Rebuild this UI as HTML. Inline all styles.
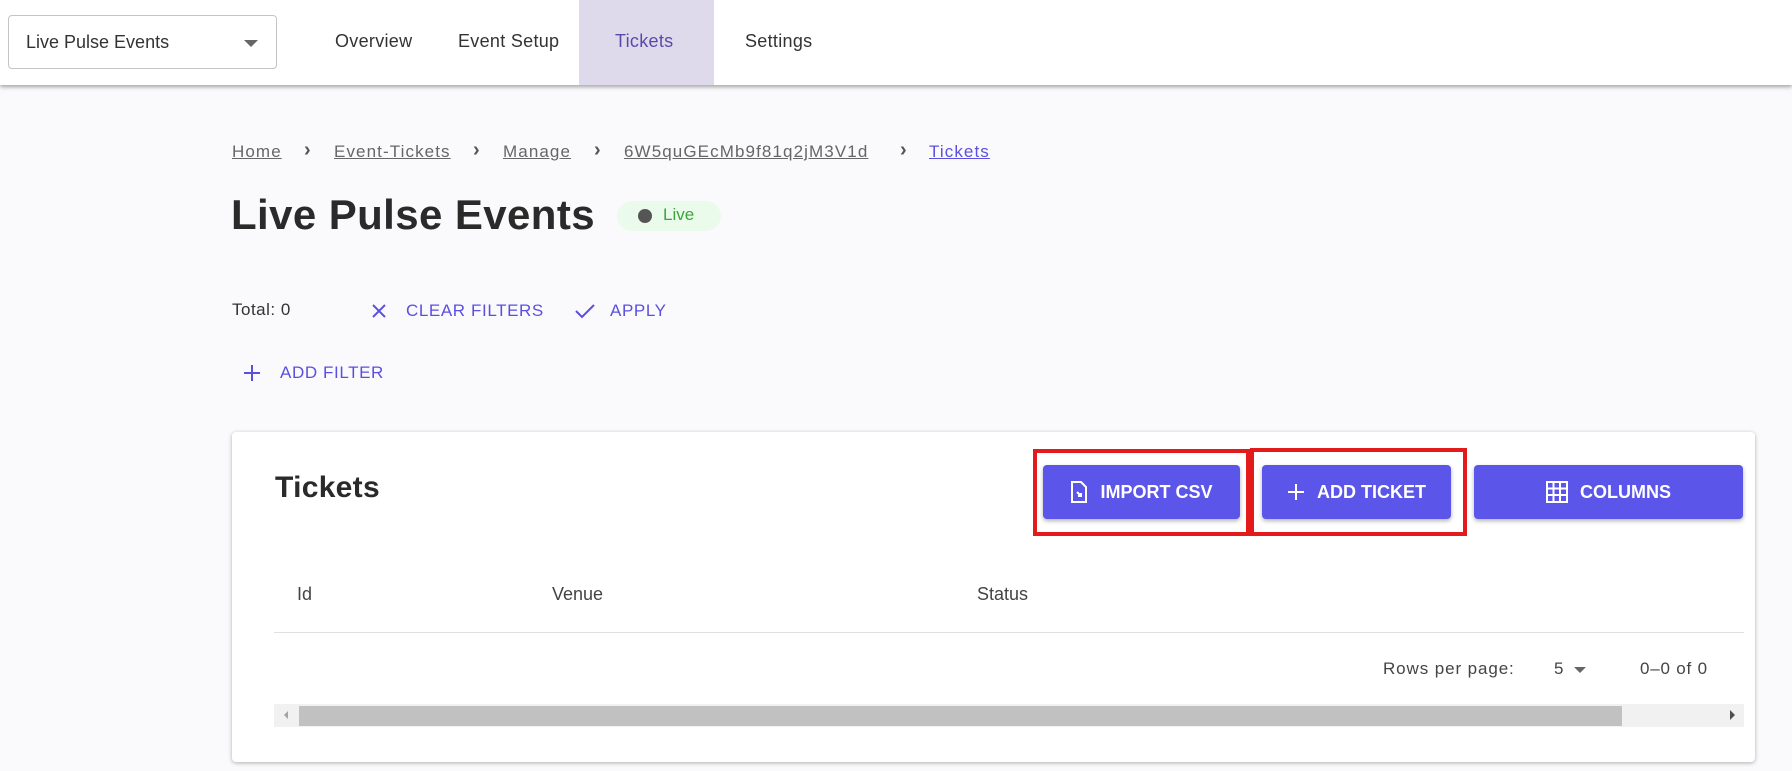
<!DOCTYPE html>
<html><head><meta charset="utf-8"><style>
*{box-sizing:border-box;margin:0;padding:0}
body{width:1792px;height:771px;background:#fafafc;font-family:"Liberation Sans",sans-serif;color:#333;position:relative;overflow:hidden}
.a{position:absolute;white-space:nowrap}
.hdr{position:absolute;left:0;top:0;width:1792px;height:85px;background:#fff;box-shadow:0 2px 4px rgba(0,0,0,.35)}
.nav{font-size:18px;color:#333;top:31px;letter-spacing:0.3px}
.bc{font-size:17px;color:#666;text-decoration:underline;top:142px;letter-spacing:1.1px}
.sep{font-size:20px;color:#555;top:139px;font-weight:bold}
.btn{position:absolute;top:465px;height:54px;background:#5b55ea;border-radius:4px;color:#fff;font-weight:bold;font-size:18px;display:flex;align-items:center;justify-content:center;gap:12px;box-shadow:0 2px 4px rgba(0,0,0,.3)}
.red{position:absolute;border:4px solid #e31b1b}
.th{font-size:18px;color:#444;top:584px}
.pur{color:#5b4fe0;font-size:17px;letter-spacing:0.6px}
</style></head><body>
<div class="hdr">
<div class="a" style="left:8px;top:15px;width:269px;height:54px;border:1px solid #c4c4c4;border-radius:4px"></div>
<div class="a" style="left:26px;top:32px;font-size:18px;color:#333">Live Pulse Events</div>
<div class="a" style="left:244px;top:40px;width:0;height:0;border-left:7px solid transparent;border-right:7px solid transparent;border-top:7px solid #666"></div>
<div class="a" style="left:579px;top:0;width:135px;height:85px;background:#dedaec"></div>
<div class="a nav" style="left:335px">Overview</div>
<div class="a nav" style="left:458px">Event Setup</div>
<div class="a nav" style="left:615px;color:#5a4aa8">Tickets</div>
<div class="a nav" style="left:745px">Settings</div>
</div>
<div class="a bc" style="left:232px">Home</div>
<div class="a sep" style="left:304px">›</div>
<div class="a bc" style="left:334px">Event-Tickets</div>
<div class="a sep" style="left:473px">›</div>
<div class="a bc" style="left:503px">Manage</div>
<div class="a sep" style="left:594px">›</div>
<div class="a bc" style="left:624px">6W5quGEcMb9f81q2jM3V1d</div>
<div class="a sep" style="left:900px">›</div>
<div class="a bc" style="left:929px;color:#5b4fe0">Tickets</div>
<div class="a" style="left:231px;top:191px;font-size:42px;font-weight:bold;color:#2a2a2a;letter-spacing:0.4px">Live Pulse Events</div>
<div class="a" style="left:617px;top:201px;width:104px;height:30px;border-radius:15px;background:#ebfbeb"></div>
<div class="a" style="left:638px;top:209px;width:14px;height:14px;border-radius:50%;background:#555"></div>
<div class="a" style="left:663px;top:205px;font-size:17px;color:#3aa63a">Live</div>
<div class="a" style="left:232px;top:300px;font-size:17px;color:#333;letter-spacing:0.5px">Total: 0</div>
<svg class="a" style="left:370px;top:302px" width="18" height="18" viewBox="0 0 18 18"><path d="M3 3L15 15M15 3L3 15" stroke="#5b4fe0" stroke-width="2"/></svg>
<div class="a pur" style="left:406px;top:301px">CLEAR FILTERS</div>
<svg class="a" style="left:574px;top:302px" width="22" height="18" viewBox="0 0 22 18"><path d="M2 9L8 15L20 3" stroke="#5b4fe0" stroke-width="2" fill="none"/></svg>
<div class="a pur" style="left:610px;top:301px">APPLY</div>
<svg class="a" style="left:243px;top:364px" width="18" height="18" viewBox="0 0 18 18"><path d="M9 1V17M1 9H17" stroke="#5b4fe0" stroke-width="2"/></svg>
<div class="a pur" style="left:280px;top:363px">ADD FILTER</div>
<div class="a" style="left:232px;top:432px;width:1523px;height:330px;background:#fff;border-radius:4px;box-shadow:0 1px 4px rgba(0,0,0,.3)"></div>
<div class="a" style="left:275px;top:471px;font-size:30px;font-weight:bold;color:#2a2a2a;letter-spacing:0.3px">Tickets</div>
<div class="btn" style="left:1043px;width:197px"><svg width="18" height="22" viewBox="0 0 18 22"><path d="M2 1H11L16 6V21H2Z" fill="none" stroke="#fff" stroke-width="2"/><path d="M7 11L11 15M11 12V15H8" stroke="#fff" stroke-width="2" fill="none"/></svg>IMPORT CSV</div>
<div class="btn" style="left:1262px;width:189px"><svg width="18" height="18" viewBox="0 0 18 18"><path d="M9 1V17M1 9H17" stroke="#fff" stroke-width="2"/></svg>ADD TICKET</div>
<div class="btn" style="left:1474px;width:269px"><svg width="22" height="22" viewBox="0 0 22 22"><rect x="1" y="1" width="20" height="20" fill="none" stroke="#fff" stroke-width="2"/><path d="M1 7.5H21M1 14H21M7.5 1V21M14 1V21" stroke="#fff" stroke-width="2"/></svg>COLUMNS</div>
<div class="red" style="left:1033px;top:449px;width:217px;height:87px"></div>
<div class="red" style="left:1250px;top:448px;width:217px;height:88px"></div>
<div class="a th" style="left:297px">Id</div>
<div class="a th" style="left:552px">Venue</div>
<div class="a th" style="left:977px">Status</div>
<div class="a" style="left:274px;top:632px;width:1470px;height:1px;background:#e0e0e0"></div>
<div class="a" style="left:1383px;top:659px;font-size:17px;color:#444;letter-spacing:0.9px">Rows per page:</div>
<div class="a" style="left:1554px;top:659px;font-size:17px;color:#444">5</div>
<div class="a" style="left:1574px;top:667px;width:0;height:0;border-left:6px solid transparent;border-right:6px solid transparent;border-top:6px solid #666"></div>
<div class="a" style="left:1640px;top:659px;font-size:17px;color:#444;letter-spacing:0.8px">0–0 of 0</div>
<div class="a" style="left:274px;top:704px;width:1470px;height:23px;background:#f1f1f1"></div>
<div class="a" style="left:299px;top:706px;width:1323px;height:20px;background:#c1c1c1"></div>
<div class="a" style="left:284px;top:711px;width:0;height:0;border-top:4px solid transparent;border-bottom:4px solid transparent;border-right:4px solid #a3a3a3"></div>
<div class="a" style="left:1730px;top:710px;width:0;height:0;border-top:5px solid transparent;border-bottom:5px solid transparent;border-left:5px solid #505050"></div>
</body></html>
